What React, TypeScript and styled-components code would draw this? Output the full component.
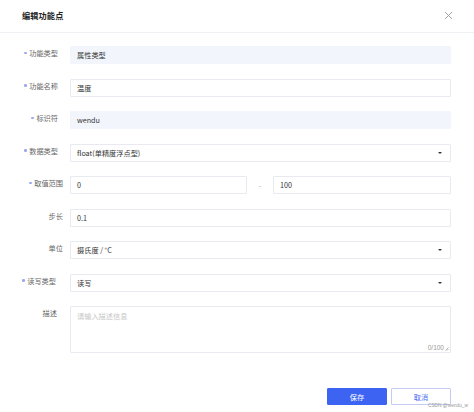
import React from "react";
import styled, { createGlobalStyle } from "styled-components";

const Global = createGlobalStyle`
  html, body { margin: 0; padding: 0; background: #fff; }
  body { font-family: "Noto Sans CJK SC", "Noto Sans", "Liberation Sans", sans-serif; }
  * { box-sizing: border-box; }
`;

const Dialog = styled.div`
  position: relative;
  width: 474px;
  height: 412px;
  background: #fff;
  overflow: hidden;
`;

const Header = styled.div`
  height: 33px;
  display: flex;
  align-items: center;
  justify-content: space-between;
  padding: 0 22px 2px 22px;
  border-bottom: 1px solid #eef0f4;
`;

const Title = styled.div`
  font-size: 8.2px;
  font-weight: 700;
  color: #222;
  letter-spacing: 0.1px;
`;

const Close = styled.div`
  width: 9px;
  height: 9px;
  display: flex;
  margin-right: -1px;
`;

const Form = styled.div`
  display: flex;
  flex-direction: column;
  gap: 14.5px;
  padding: 13px 23px 0 0;
`;

const Row = styled.div`
  display: flex;
  align-items: flex-start;
`;

const Label = styled.div<{ $pr: number }>`
  width: 70px;
  flex: none;
  display: flex;
  align-items: center;
  justify-content: flex-end;
  padding-right: ${(p) => p.$pr}px;
  font-size: 7.2px;
  line-height: 14px;
  color: #666;
  white-space: nowrap;
`;

const Star = styled.span`
  width: 2.5px;
  height: 2.5px;
  border-radius: 50%;
  background: #9aa8f2;
  margin-right: 2.5px;
`;

const Field = styled.div<{ $disabled?: boolean; $w?: number }>`
  position: relative;
  ${(p) => (p.$w ? `width: ${p.$w}px;` : "flex: 1;")}
  height: 18px;
  display: flex;
  align-items: center;
  padding: 0 6px;
  font-size: 7.2px;
  color: #333;
  background: ${(p) => (p.$disabled ? "#f2f6fc" : "#fff")};
  border: 1px solid ${(p) => (p.$disabled ? "#f2f6fc" : "#e8eaef")};
  border-radius: 1px;
`;

const FieldText = styled.span`
  flex: 1;
  white-space: nowrap;
`;

const Caret = styled.span`
  width: 0;
  height: 0;
  border-left: 2px solid transparent;
  border-right: 2px solid transparent;
  border-top: 2.5px solid #333;
  margin-right: 2px;
`;

const RangeWrap = styled.div`
  flex: 1;
  display: flex;
  align-items: center;
`;

const Dash = styled.div`
  width: 26px;
  text-align: center;
  font-size: 7px;
  color: #999;
  line-height: 18px;
`;

const TextArea = styled.div`
  position: relative;
  flex: 1;
  height: 47px;
  border: 1px solid #e8eaef;
  border-radius: 1px;
  padding: 4px 6px;
  font-size: 7.2px;
  color: #c8c8c8;
`;

const Counter = styled.div`
  position: absolute;
  right: 6px;
  bottom: 1px;
  font-size: 6.5px;
  color: #999;
  font-family: "Liberation Sans", sans-serif;
`;

const Resize = styled.svg`
  position: absolute;
  right: 1px;
  bottom: 1px;
`;

const Footer = styled.div`
  display: flex;
  justify-content: flex-end;
  gap: 4px;
  padding: 35px 23px 0 0;
`;

const Button = styled.div<{ $primary?: boolean }>`
  width: 60px;
  height: 17px;
  display: flex;
  align-items: center;
  justify-content: center;
  font-size: 7.2px;
  border-radius: 1px;
  background: ${(p) => (p.$primary ? "#3d63f3" : "#fff")};
  color: ${(p) => (p.$primary ? "#fff" : "#4a6cf5")};
  border: 1px solid ${(p) => (p.$primary ? "#3d63f3" : "#c3cbf3")};
`;

const Watermark = styled.div`
  position: absolute;
  right: 6px;
  bottom: 4px;
  font-size: 4.8px;
  color: #999;
  font-family: "Liberation Sans", sans-serif;
`;

type RowDef = {
  label: string;
  req?: boolean;
  pr?: number;
  value: string;
  disabled?: boolean;
  select?: boolean;
};

const rows: RowDef[] = [
  { label: "功能类型", req: true, value: "属性类型", disabled: true },
  { label: "功能名称", req: true, value: "温度" },
  { label: "标识符", req: true, value: "wendu", disabled: true },
  { label: "数据类型", req: true, value: "float(单精度浮点型)", select: true },
];

const rows2: RowDef[] = [
  { label: "步长", pr: 7, value: "0.1" },
  { label: "单位", pr: 7, value: "摄氏度 / °C", select: true },
  { label: "读写类型", req: true, pr: 14, value: "读写", select: true },
];

function FormRow({ r }: { r: RowDef }) {
  return (
    <Row>
      <Label $pr={r.pr ?? 12}>
        {r.req && <Star />}
        {r.label}
      </Label>
      <Field $disabled={r.disabled}>
        <FieldText>{r.value}</FieldText>
        {r.select && <Caret />}
      </Field>
    </Row>
  );
}

export default function App() {
  return (
    <Dialog>
      <Global />
      <Header>
        <Title>编辑功能点</Title>
        <Close>
          <svg width="9" height="9" viewBox="0 0 9 9">
            <path d="M1 1L8 8M8 1L1 8" stroke="#999" strokeWidth="0.9" fill="none" />
          </svg>
        </Close>
      </Header>
      <Form>
        {rows.map((r) => (
          <FormRow key={r.label} r={r} />
        ))}
        <Row>
          <Label $pr={7}>
            <Star />取值范围
          </Label>
          <RangeWrap>
            <Field $w={177}>
              <FieldText>0</FieldText>
            </Field>
            <Dash>-</Dash>
            <Field>
              <FieldText>100</FieldText>
            </Field>
          </RangeWrap>
        </Row>
        {rows2.map((r) => (
          <FormRow key={r.label} r={r} />
        ))}
        <Row>
          <Label $pr={13}>描述</Label>
          <TextArea>
            请输入描述信息
            <Counter>0/100</Counter>
            <Resize width="4" height="4" viewBox="0 0 4 4">
              <path d="M0.5 3.5L3.5 0.5M2 3.5L3.5 2" stroke="#888" strokeWidth="0.6" />
            </Resize>
          </TextArea>
        </Row>
      </Form>
      <Footer>
        <Button $primary>保存</Button>
        <Button>取消</Button>
      </Footer>
      <Watermark>CSDN @wendu_w</Watermark>
    </Dialog>
  );
}
